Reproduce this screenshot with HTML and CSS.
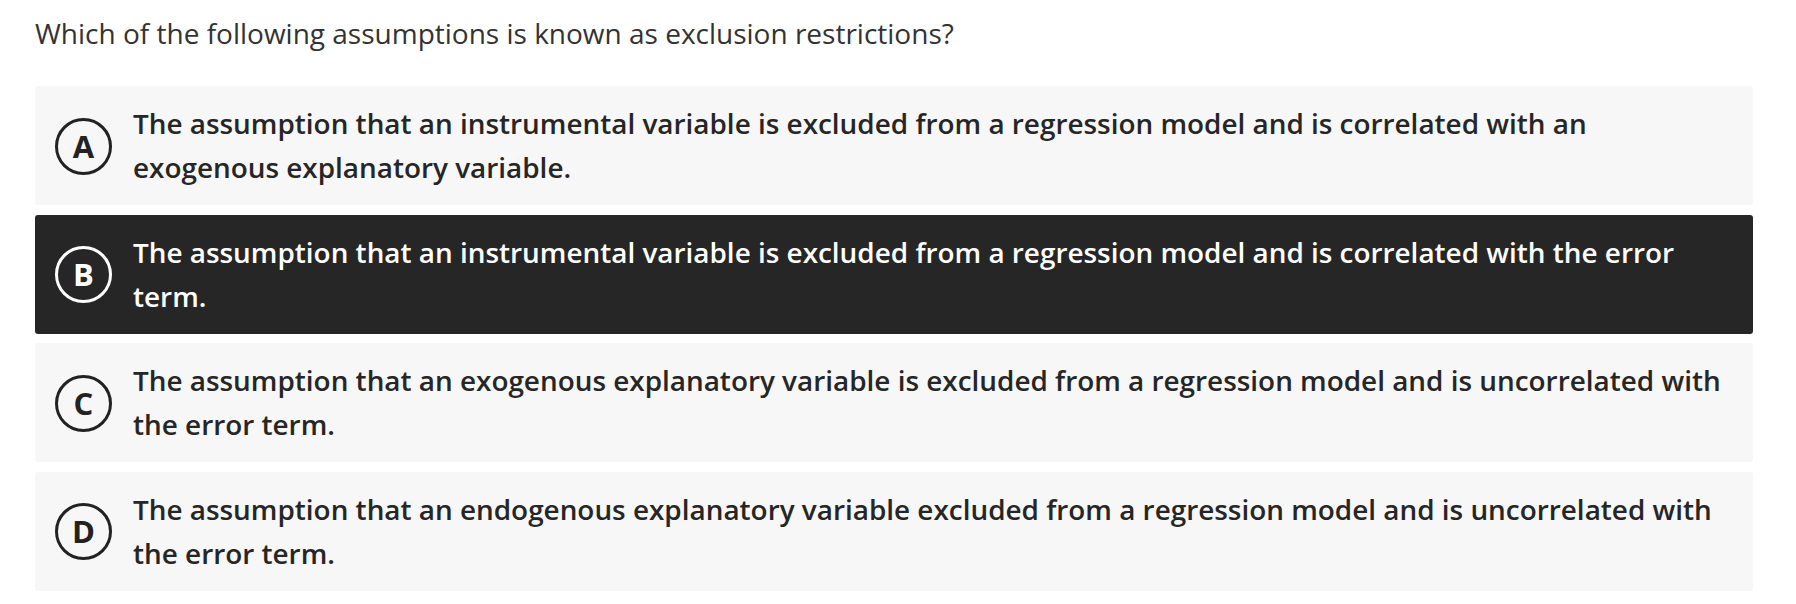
FILE: index.html
```html
<!DOCTYPE html>
<html lang="en">
<head>
<meta charset="utf-8">
<title>Question</title>
<link rel="stylesheet" href="styles.css">
</head>
<body>
<main class="page">
  <p class="question">Which of the following assumptions is known as exclusion restrictions?</p>
  <ul class="options">
    <li class="option">
      <span class="badge">A</span>
      <span class="text">The assumption that an instrumental variable is excluded from a regression model and is correlated with an exogenous explanatory variable.</span>
    </li>
    <li class="option selected">
      <span class="badge">B</span>
      <span class="text">The assumption that an instrumental variable is excluded from a regression model and is correlated with the error term.</span>
    </li>
    <li class="option">
      <span class="badge">C</span>
      <span class="text">The assumption that an exogenous explanatory variable is excluded from a regression model and is uncorrelated with the error term.</span>
    </li>
    <li class="option">
      <span class="badge">D</span>
      <span class="text">The assumption that an endogenous explanatory variable excluded from a regression model and is uncorrelated with the error term.</span>
    </li>
  </ul>
</main>
</body>
</html>
```
FILE: styles.css
```css
html, body {
  margin: 0;
  padding: 0;
  background: #ffffff;
}
.page {
  padding: 0 43px 0 35px;
  font-family: "Open Sans", "Liberation Sans", sans-serif;
  color: #262626;
}
.question {
  margin: 0 0 34px;
  padding-top: 14px;
  font-size: 28px;
  line-height: 38px;
  font-weight: 400;
  color: #333333;
}
.options {
  list-style: none;
  margin: 0;
  padding: 0;
  display: flex;
  flex-direction: column;
  gap: 9.5px;
}
.option {
  display: flex;
  align-items: center;
  gap: 21px;
  padding: 15px 27px 16px 20px;
  background: #f7f7f7;
  border-radius: 3px;
  color: #262626;
}
.option.selected {
  background: #262626;
  color: #ffffff;
}
.badge {
  flex-shrink: 0;
  width: 57px;
  height: 57px;
  box-sizing: border-box;
  border: 3.5px solid #222222;
  border-radius: 50%;
  display: flex;
  align-items: center;
  justify-content: center;
  font-size: 31px;
  font-weight: 700;
  line-height: 1;
  color: #222222;
  margin-top: 2px;
}
.selected .badge {
  border-color: #ffffff;
  color: #ffffff;
}
.text {
  font-size: 27.9px;
  line-height: 44px;
  font-weight: 600;
}
```
